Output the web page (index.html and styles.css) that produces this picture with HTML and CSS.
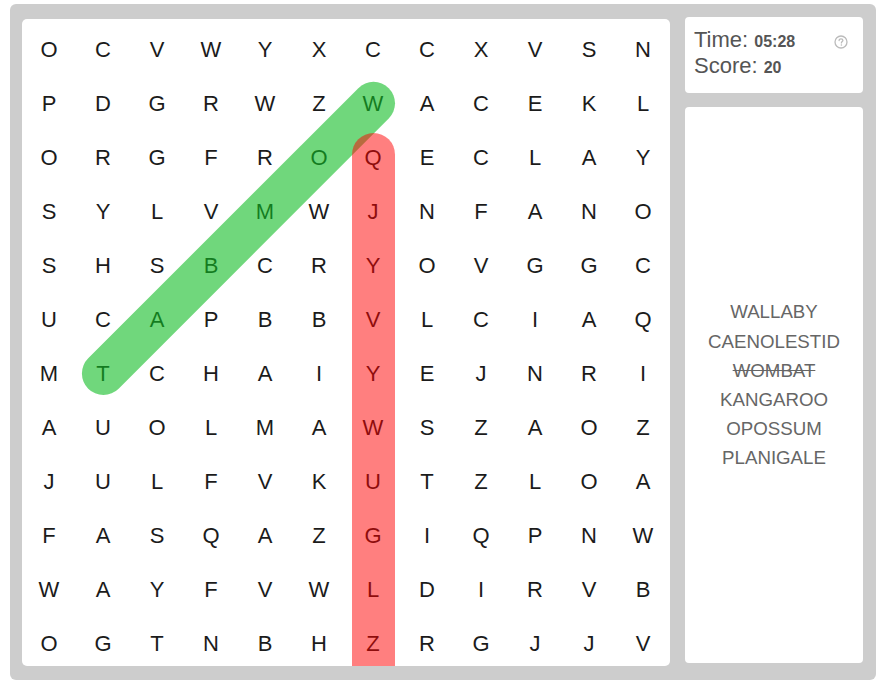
FILE: index.html
```html
<!DOCTYPE html>
<html>
<head>
<meta charset="utf-8">
<link rel="stylesheet" href="styles.css">
</head>
<body>
<div class="frame">
  <div class="board">
    <div class="grid">
      <span>O</span><span>C</span><span>V</span><span>W</span><span>Y</span><span>X</span><span>C</span><span>C</span><span>X</span><span>V</span><span>S</span><span>N</span>
      <span>P</span><span>D</span><span>G</span><span>R</span><span>W</span><span>Z</span><span>W</span><span>A</span><span>C</span><span>E</span><span>K</span><span>L</span>
      <span>O</span><span>R</span><span>G</span><span>F</span><span>R</span><span>O</span><span>Q</span><span>E</span><span>C</span><span>L</span><span>A</span><span>Y</span>
      <span>S</span><span>Y</span><span>L</span><span>V</span><span>M</span><span>W</span><span>J</span><span>N</span><span>F</span><span>A</span><span>N</span><span>O</span>
      <span>S</span><span>H</span><span>S</span><span>B</span><span>C</span><span>R</span><span>Y</span><span>O</span><span>V</span><span>G</span><span>G</span><span>C</span>
      <span>U</span><span>C</span><span>A</span><span>P</span><span>B</span><span>B</span><span>V</span><span>L</span><span>C</span><span>I</span><span>A</span><span>Q</span>
      <span>M</span><span>T</span><span>C</span><span>H</span><span>A</span><span>I</span><span>Y</span><span>E</span><span>J</span><span>N</span><span>R</span><span>I</span>
      <span>A</span><span>U</span><span>O</span><span>L</span><span>M</span><span>A</span><span>W</span><span>S</span><span>Z</span><span>A</span><span>O</span><span>Z</span>
      <span>J</span><span>U</span><span>L</span><span>F</span><span>V</span><span>K</span><span>U</span><span>T</span><span>Z</span><span>L</span><span>O</span><span>A</span>
      <span>F</span><span>A</span><span>S</span><span>Q</span><span>A</span><span>Z</span><span>G</span><span>I</span><span>Q</span><span>P</span><span>N</span><span>W</span>
      <span>W</span><span>A</span><span>Y</span><span>F</span><span>V</span><span>W</span><span>L</span><span>D</span><span>I</span><span>R</span><span>V</span><span>B</span>
      <span>O</span><span>G</span><span>T</span><span>N</span><span>B</span><span>H</span><span>Z</span><span>R</span><span>G</span><span>J</span><span>J</span><span>V</span>
      <div class="mark mark-found"></div>
      <div class="mark mark-current"></div>
    </div>
  </div>
  <div class="side">
    <div class="stats">
      <div class="stat">Time: <b>05:28</b></div>
      <div class="stat">Score: <b>20</b></div>
      <svg class="help" width="14" height="14" viewBox="0 0 14 14">
        <circle cx="7" cy="7" r="6" fill="none" stroke="#bbb" stroke-width="1.3"/>
        <path d="M5.1 5.6 C5.1 4.4 6 3.8 7 3.8 C8.1 3.8 8.9 4.5 8.9 5.4 C8.9 6.5 7.4 6.7 7.4 7.9" fill="none" stroke="#bbb" stroke-width="1.3" stroke-linecap="round"/>
        <circle cx="7.4" cy="10" r="0.8" fill="#bbb"/>
      </svg>
    </div>
    <div class="words">
      <div class="word">WALLABY</div>
      <div class="word">CAENOLESTID</div>
      <div class="word done">WOMBAT</div>
      <div class="word">KANGAROO</div>
      <div class="word">OPOSSUM</div>
      <div class="word">PLANIGALE</div>
    </div>
  </div>
</div>
</body>
</html>
```

FILE: styles.css
```css
html, body {
  margin: 0;
  padding: 0;
  background: #fff;
}
body {
  font-family: "Liberation Sans", Arial, sans-serif;
}
.frame {
  margin: 4px 0 0 10px;
  width: 866px;
  height: 676px;
  box-sizing: border-box;
  background: #cdcdcd;
  border-radius: 6px;
  padding: 0 13px 0 12px;
  display: flex;
  align-items: flex-start;
  gap: 15px;
}
.board {
  margin-top: 15px;
  width: 648px;
  height: 647px;
  box-sizing: border-box;
  padding-top: 3px;
  background: #fff;
  border-radius: 5px;
  overflow: hidden;
}
.grid {
  position: relative;
  display: grid;
  grid-template-columns: repeat(12, 54px);
  grid-template-rows: repeat(12, 54px);
}
.grid span {
  display: flex;
  align-items: center;
  justify-content: center;
  padding-top: 2px;
  font-size: 22px;
  color: #1b1b1b;
  line-height: 1;
}
.mark {
  position: absolute;
  height: 43px;
  border-radius: 21.5px;
}
.mark-found {
  background: rgba(16, 188, 36, 0.6);
  width: 424.8px;
  left: 3.6px;
  top: 194.5px;
  transform: rotate(-45deg);
}
.mark-current {
  background: rgba(255, 0, 0, 0.5);
  width: 43px;
  height: 560px;
  left: 329.5px;
  top: 111px;
  border-radius: 21.5px 21.5px 0 0;
}
.side {
  margin-top: 13px;
  width: 178px;
  display: flex;
  flex-direction: column;
  gap: 14px;
}
.stats {
  position: relative;
  height: 76px;
  box-sizing: border-box;
  background: #fff;
  border-radius: 4px;
  padding: 11px 9px 0;
  color: #555;
}
.stat {
  font-size: 22px;
  line-height: 24px;
}
.stat b {
  font-size: 16px;
}
.help {
  position: absolute;
  right: 15px;
  top: 18px;
}
.words {
  height: 556px;
  background: #fff;
  border-radius: 4px;
  display: flex;
  flex-direction: column;
  justify-content: center;
  align-items: center;
}
.word {
  font-size: 18.7px;
  line-height: 29.2px;
  color: #666;
}
.word.done {
  text-decoration: line-through;
}
```
